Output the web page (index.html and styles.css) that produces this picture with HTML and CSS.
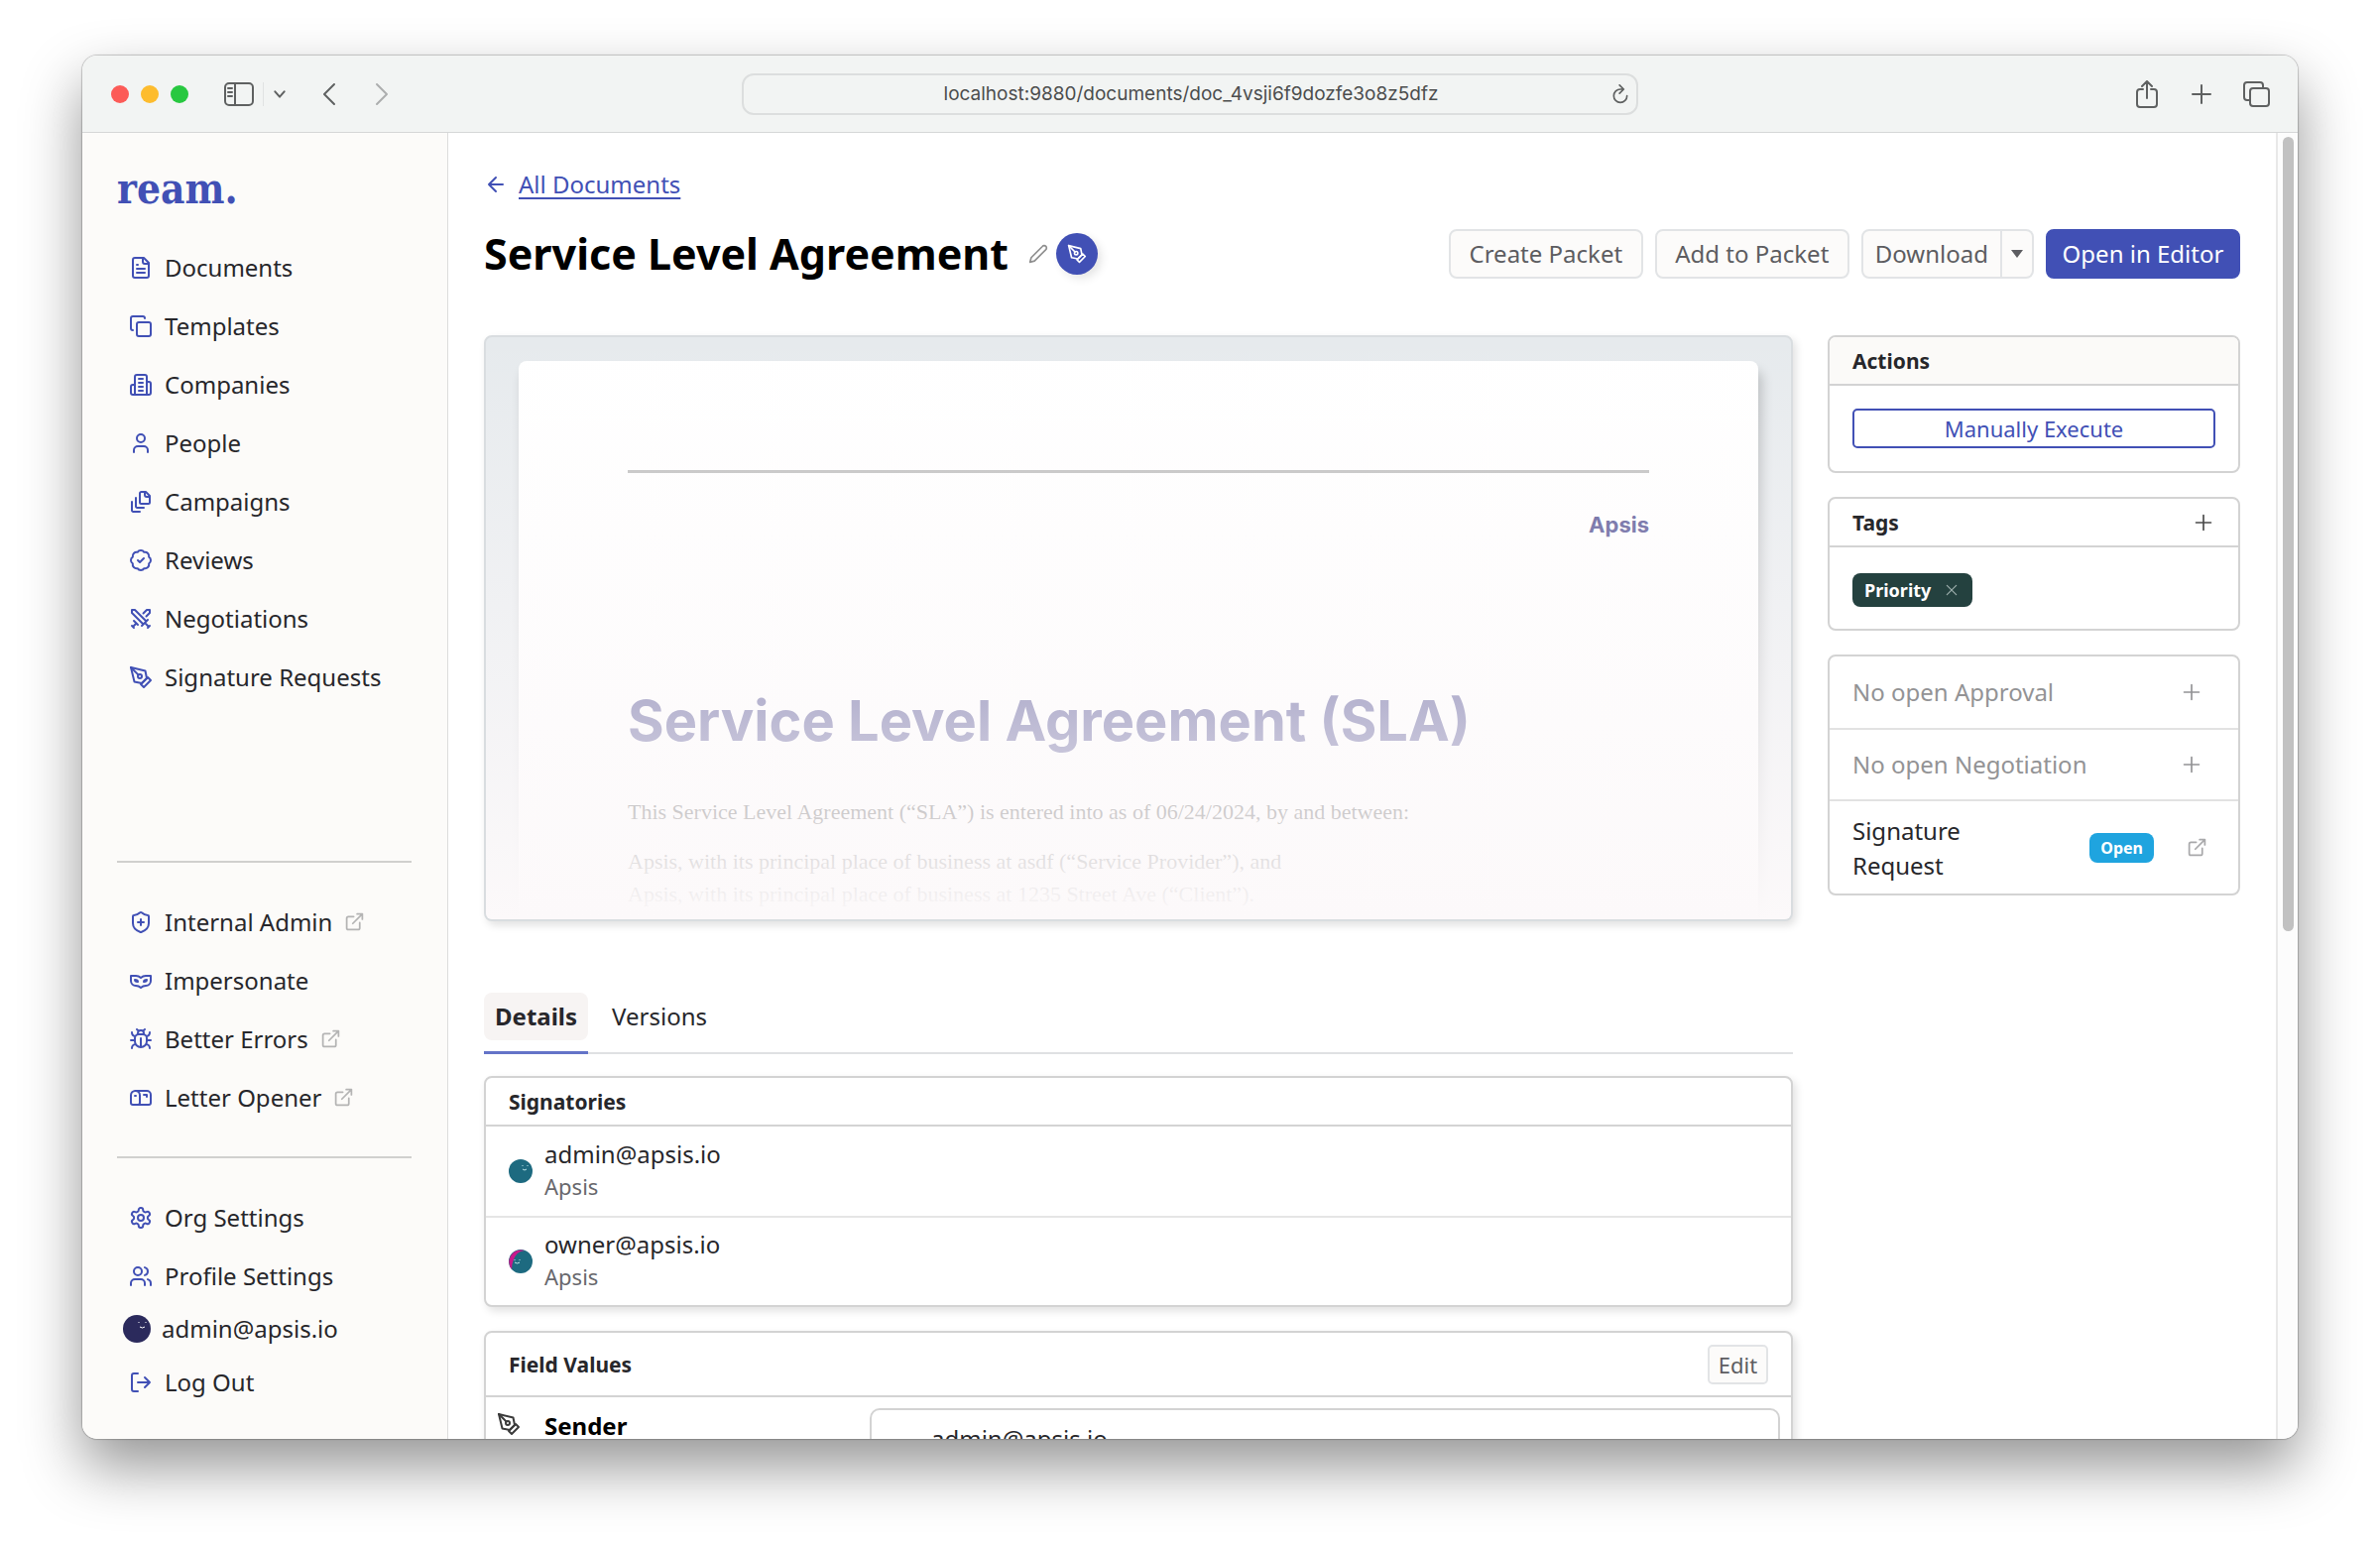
FILE: index.html
```html
<!DOCTYPE html>
<html lang="en">
<head>
  <meta charset="UTF-8">
  <title>Service Level Agreement</title>
  <link rel="stylesheet" href="styles.css">
</head>
<body>

  <!-- icon sprite -->
  <svg class="sprite" aria-hidden="true">
    <symbol id="i-file" viewBox="0 0 24 24"><path d="M15 2H6a2 2 0 0 0-2 2v16a2 2 0 0 0 2 2h12a2 2 0 0 0 2-2V7z"/><path d="M14 2v4a2 2 0 0 0 2 2h4M9 9H8M16 13H8M16 17H8"/></symbol>
    <symbol id="i-copy" viewBox="0 0 24 24"><rect x="8" y="8" width="14" height="14" rx="2"/><path d="M4 16a2 2 0 0 1-2-2V4a2 2 0 0 1 2-2h10a2 2 0 0 1 2 2"/></symbol>
    <symbol id="i-building" viewBox="0 0 24 24"><path d="M6 22V4a2 2 0 0 1 2-2h8a2 2 0 0 1 2 2v18Z"/><path d="M6 12H4a2 2 0 0 0-2 2v6a2 2 0 0 0 2 2h2M18 9h2a2 2 0 0 1 2 2v9a2 2 0 0 1-2 2h-2M10 6h4M10 10h4M10 14h4M10 18h4"/></symbol>
    <symbol id="i-user" viewBox="0 0 24 24"><path d="M19 21v-2a4 4 0 0 0-4-4H9a4 4 0 0 0-4 4v2"/><circle cx="12" cy="7" r="4"/></symbol>
    <symbol id="i-stack" viewBox="0 0 24 24"><path d="M21 7h-3a2 2 0 0 1-2-2V2"/><path d="M21 6v6.5c0 .8-.7 1.5-1.5 1.5h-7c-.8 0-1.5-.7-1.5-1.5v-9c0-.8.7-1.5 1.5-1.5H17Z"/><path d="M7 8v8.8c0 .3.2.6.4.8.2.2.5.4.8.4H15"/><path d="M3 12v8.8c0 .3.2.6.4.8.2.2.5.4.8.4H11"/></symbol>
    <symbol id="i-badge" viewBox="0 0 24 24"><path d="M3.85 8.62a4 4 0 0 1 4.78-4.77 4 4 0 0 1 6.74 0 4 4 0 0 1 4.78 4.78 4 4 0 0 1 0 6.74 4 4 0 0 1-4.77 4.78 4 4 0 0 1-6.75 0 4 4 0 0 1-4.78-4.77 4 4 0 0 1 0-6.76Z"/><path d="m9 12 2 2 4-4"/></symbol>
    <symbol id="i-swords" viewBox="0 0 24 24"><path d="M14.5 17.5 3 6V3h3l11.5 11.5M13 19l6-6M16 16l4 4M19 21l2-2M14.5 6.5 18 3h3v3l-3.5 3.5M5 14l4 4M7 17l-3 3M3 19l2 2"/></symbol>
    <symbol id="i-pen" viewBox="0 0 24 24"><path d="m12 19 7-7 3 3-7 7-3-3z"/><path d="m18 13-1.5-7.5L2 2l3.5 14.5L13 18l5-5z"/><path d="m2 2 7.6 7.6"/><circle cx="11" cy="11" r="2"/></symbol>
    <symbol id="i-shield" viewBox="0 0 24 24"><path d="M20 13c0 5-3.5 7.5-7.66 8.95a1 1 0 0 1-.67-.01C7.5 20.5 4 18 4 13V6a1 1 0 0 1 1-1c2 0 4.5-1.2 6.24-2.72a1.17 1.17 0 0 1 1.52 0C14.51 3.81 17 5 19 5a1 1 0 0 1 1 1z"/><path d="M9 12h6M12 9v6"/></symbol>
    <symbol id="i-mask" viewBox="0 0 24 24"><path d="M2 12a5 5 0 0 0 5 5 8 8 0 0 1 5 2 8 8 0 0 1 5-2 5 5 0 0 0 5-5V7h-5a8 8 0 0 0-5 2 8 8 0 0 0-5-2H2Z"/><path d="M6 11c1.5 0 3 .5 3 2-2 0-3 0-3-2ZM18 11c-1.5 0-3 .5-3 2 2 0 3 0 3-2Z"/></symbol>
    <symbol id="i-bug" viewBox="0 0 24 24"><path d="m8 2 1.9 1.9M14.1 3.9 16 2M9 7.1v-1a3 3 0 1 1 6 0v1M12 20c-3.3 0-6-2.7-6-6v-3a4 4 0 0 1 4-4h4a4 4 0 0 1 4 4v3c0 3.3-2.7 6-6 6M12 20v-9M6.5 9C4.6 8.8 3 7.1 3 5M6 13H2M3 21c0-2.1 1.7-3.9 3.8-4M21 5c0 2.1-1.6 3.8-3.5 4M22 13h-4M17.2 17c2.1.1 3.8 1.9 3.8 4"/></symbol>
    <symbol id="i-mailbox" viewBox="0 0 24 24"><path d="M22 17a2 2 0 0 1-2 2H4a2 2 0 0 1-2-2V9.5C2 7 4 5 6.5 5H18c2.2 0 4 1.8 4 4v8Z"/><path d="M15 9h3v2M6.5 5C9 5 11 7 11 9.5V17a2 2 0 0 1-2 2M6 10h1"/></symbol>
    <symbol id="i-gear" viewBox="0 0 24 24"><path d="M12.22 2h-.44a2 2 0 0 0-2 2v.18a2 2 0 0 1-1 1.73l-.43.25a2 2 0 0 1-2 0l-.15-.08a2 2 0 0 0-2.73.73l-.22.38a2 2 0 0 0 .73 2.73l.15.1a2 2 0 0 1 1 1.72v.51a2 2 0 0 1-1 1.74l-.15.09a2 2 0 0 0-.73 2.73l.22.38a2 2 0 0 0 2.73.73l.15-.08a2 2 0 0 1 2 0l.43.25a2 2 0 0 1 1 1.73V20a2 2 0 0 0 2 2h.44a2 2 0 0 0 2-2v-.18a2 2 0 0 1 1-1.73l.43-.25a2 2 0 0 1 2 0l.15.08a2 2 0 0 0 2.73-.73l.22-.39a2 2 0 0 0-.73-2.73l-.15-.08a2 2 0 0 1-1-1.74v-.5a2 2 0 0 1 1-1.74l.15-.09a2 2 0 0 0 .73-2.73l-.22-.38a2 2 0 0 0-2.73-.73l-.15.08a2 2 0 0 1-2 0l-.43-.25a2 2 0 0 1-1-1.73V4a2 2 0 0 0-2-2z"/><circle cx="12" cy="12" r="3"/></symbol>
    <symbol id="i-users" viewBox="0 0 24 24"><path d="M16 21v-2a4 4 0 0 0-4-4H6a4 4 0 0 0-4 4v2"/><circle cx="9" cy="7" r="4"/><path d="M22 21v-2a4 4 0 0 0-3-3.87M16 3.13a4 4 0 0 1 0 7.75"/></symbol>
    <symbol id="i-logout" viewBox="0 0 24 24"><path d="M9 21H5a2 2 0 0 1-2-2V5a2 2 0 0 1 2-2h4M16 17l5-5-5-5M21 12H9"/></symbol>
    <symbol id="i-external" viewBox="0 0 24 24"><path d="M15 3h6v6M10 14 21 3M18 13v6a2 2 0 0 1-2 2H5a2 2 0 0 1-2-2V8a2 2 0 0 1 2-2h6"/></symbol>
    <symbol id="i-arrow" viewBox="0 0 24 24"><path d="m12 19-7-7 7-7M19 12H5"/></symbol>
    <symbol id="i-pencil" viewBox="0 0 24 24"><path d="M17 3a2.85 2.83 0 1 1 4 4L7.5 20.5 2 22l1.5-5.5Z"/></symbol>
    <symbol id="i-plus" viewBox="0 0 24 24"><path d="M3 12h18M12 3v18"/></symbol>
    <symbol id="i-x" viewBox="0 0 24 24"><path d="M4 4l16 16M20 4 4 20"/></symbol>
    <symbol id="i-caret" viewBox="0 0 24 24"><path d="M3 6h18l-9 12z"/></symbol>
    <symbol id="i-panel" viewBox="0 0 30 24"><rect x="1" y="1" width="28" height="22" rx="4"/><path d="M11 1v22M4 6h4M4 10h4M4 14h4"/></symbol>
    <symbol id="i-down" viewBox="0 0 24 24"><path d="m5 8 7 8 7-8"/></symbol>
    <symbol id="i-prev" viewBox="0 0 24 24"><path d="M17 2 7 12l10 10"/></symbol>
    <symbol id="i-next" viewBox="0 0 24 24"><path d="m7 2 10 10L7 22"/></symbol>
    <symbol id="i-reload" viewBox="0 0 24 24"><path d="M15 6h-3a8 8 0 1 0 8 8M11 1l5 5-5 5"/></symbol>
    <symbol id="i-share" viewBox="0 0 28 28"><path d="M10 9H7a3 3 0 0 0-3 3v12a3 3 0 0 0 3 3h14a3 3 0 0 0 3-3V12a3 3 0 0 0-3-3h-3M14 18V1M9 6l5-5 5 5"/></symbol>
    <symbol id="i-tabs" viewBox="0 0 28 28"><rect x="8" y="8" width="19" height="18" rx="3"/><path d="M8 20H5a3 3 0 0 1-3-3V5a3 3 0 0 1 3-3h13a3 3 0 0 1 3 3v3"/></symbol>
  </svg>

  <div class="window">
    <div class="titlebar">
      <div class="titlebar-left">
        <div class="lights">
          <span class="light red"></span>
          <span class="light yellow"></span>
          <span class="light green"></span>
        </div>
        <button class="tool" aria-label="Show sidebar"><svg class="icon panel"><use href="#i-panel"/></svg></button>
        <button class="tool more" aria-label="Tab groups"><svg class="icon small"><use href="#i-down"/></svg></button>
        <button class="tool" aria-label="Back"><svg class="icon"><use href="#i-prev"/></svg></button>
        <button class="tool forward" aria-label="Forward"><svg class="icon"><use href="#i-next"/></svg></button>
      </div>
      <div class="address">
        <input type="text" aria-label="Address" value="localhost:9880/documents/doc_4vsji6f9dozfe3o8z5dfz">
        <button class="tool" aria-label="Reload"><svg class="icon"><use href="#i-reload"/></svg></button>
      </div>
      <div class="titlebar-right">
        <button class="tool" aria-label="Share"><svg class="icon large"><use href="#i-share"/></svg></button>
        <button class="tool" aria-label="New tab"><svg class="icon"><use href="#i-plus"/></svg></button>
        <button class="tool" aria-label="Show tabs"><svg class="icon large"><use href="#i-tabs"/></svg></button>
      </div>
    </div>

    <div class="app">
      <aside class="sidebar">
        <a class="logo" href="#">ream.</a>
        <nav class="nav">
          <a href="#"><svg class="icon"><use href="#i-file"/></svg>Documents</a>
          <a href="#"><svg class="icon"><use href="#i-copy"/></svg>Templates</a>
          <a href="#"><svg class="icon"><use href="#i-building"/></svg>Companies</a>
          <a href="#"><svg class="icon"><use href="#i-user"/></svg>People</a>
          <a href="#"><svg class="icon"><use href="#i-stack"/></svg>Campaigns</a>
          <a href="#"><svg class="icon"><use href="#i-badge"/></svg>Reviews</a>
          <a href="#"><svg class="icon"><use href="#i-swords"/></svg>Negotiations</a>
          <a href="#"><svg class="icon"><use href="#i-pen"/></svg>Signature Requests</a>
        </nav>
        <hr class="push">
        <nav class="nav">
          <a href="#"><svg class="icon"><use href="#i-shield"/></svg>Internal Admin<svg class="icon ext"><use href="#i-external"/></svg></a>
          <a href="#"><svg class="icon"><use href="#i-mask"/></svg>Impersonate</a>
          <a href="#"><svg class="icon"><use href="#i-bug"/></svg>Better Errors<svg class="icon ext"><use href="#i-external"/></svg></a>
          <a href="#"><svg class="icon"><use href="#i-mailbox"/></svg>Letter Opener<svg class="icon ext"><use href="#i-external"/></svg></a>
        </nav>
        <hr>
        <nav class="nav">
          <a href="#"><svg class="icon"><use href="#i-gear"/></svg>Org Settings</a>
          <a href="#"><svg class="icon"><use href="#i-users"/></svg>Profile Settings</a>
          <a class="me" href="#">
            <svg class="avatar" viewBox="0 0 28 28"><circle cx="14" cy="14" r="14" fill="#2b2a5c"/><path d="M16 7v1M23 7v1M17 12q2.5 2 5 0" stroke="#fff" fill="none"/></svg>admin@apsis.io
          </a>
          <a href="#"><svg class="icon"><use href="#i-logout"/></svg>Log Out</a>
        </nav>
      </aside>

      <main class="main">
        <div class="back"><svg class="icon"><use href="#i-arrow"/></svg><a href="#">All Documents</a></div>

        <div class="page-head">
          <h1>Service Level Agreement</h1>
          <button class="rename" aria-label="Rename"><svg class="icon"><use href="#i-pencil"/></svg></button>
          <span class="status"><svg class="icon"><use href="#i-pen"/></svg></span>
          <div class="buttons">
            <button class="btn">Create Packet</button>
            <button class="btn">Add to Packet</button>
            <div class="split">
              <button class="btn">Download</button>
              <button class="btn caret" aria-label="More downloads"><svg><use href="#i-caret"/></svg></button>
            </div>
            <button class="btn primary">Open in Editor</button>
          </div>
        </div>

        <div class="columns">
          <div class="content">
            <section class="preview">
              <article class="paper">
                <div class="rule"></div>
                <p class="org">Apsis</p>
                <h2>Service Level Agreement (SLA)</h2>
                <p>This Service Level Agreement (“SLA”) is entered into as of 06/24/2024, by and between:</p>
                <p>Apsis, with its principal place of business at asdf (“Service Provider”), and<br>
                Apsis, with its principal place of business at 1235 Street Ave (“Client”).</p>
              </article>
            </section>

            <div class="tabs">
              <a class="tab active" href="#"><span>Details</span></a>
              <a class="tab" href="#"><span>Versions</span></a>
            </div>

            <section class="card raised">
              <header><h3>Signatories</h3></header>
              <div class="person">
                <svg class="avatar" viewBox="0 0 24 24"><circle cx="12" cy="12" r="12" fill="#1d6a80"/><path d="M14 6v1M19 6v1M14 10q2 2 4 0" stroke="#bfe6ea" fill="none"/></svg>
                <div class="who">
                  <div>admin@apsis.io</div>
                  <div class="sub">Apsis</div>
                </div>
              </div>
              <div class="person">
                <svg class="avatar" viewBox="0 0 24 24"><circle cx="12" cy="12" r="12" fill="#1d6a80"/><path d="M3 20A12 12 0 0 1 16 1Q4 2 3 20Z" fill="#c8188c"/><path d="M6 10v1M11 10v1M6 13q2.5 2 5 0" stroke="#bfe6ea" fill="none"/></svg>
                <div class="who">
                  <div>owner@apsis.io</div>
                  <div class="sub">Apsis</div>
                </div>
              </div>
            </section>

            <section class="card raised">
              <header class="tall"><h3>Field Values</h3><button class="btn edit">Edit</button></header>
              <div class="field">
                <svg class="icon"><use href="#i-pen"/></svg>
                <label for="sender">Sender</label>
                <input id="sender" type="text" value="admin@apsis.io">
              </div>
            </section>
          </div>

          <div class="side">
            <section class="card">
              <header class="tinted"><h3>Actions</h3></header>
              <div class="card-body"><button class="btn outline">Manually Execute</button></div>
            </section>

            <section class="card">
              <header><h3>Tags</h3><button class="add" aria-label="Add tag"><svg class="icon"><use href="#i-plus"/></svg></button></header>
              <div class="card-body tags">
                <span class="tag">Priority<button aria-label="Remove tag"><svg class="icon"><use href="#i-x"/></svg></button></span>
              </div>
            </section>

            <section class="card">
              <div class="row muted">No open Approval<button class="add" aria-label="Open approval"><svg class="icon"><use href="#i-plus"/></svg></button></div>
              <div class="row muted">No open Negotiation<button class="add" aria-label="Open negotiation"><svg class="icon"><use href="#i-plus"/></svg></button></div>
              <div class="row request">
                <span class="request-name">Signature Request</span>
                <span class="open">Open</span>
                <a href="#" aria-label="View signature request"><svg class="icon ext"><use href="#i-external"/></svg></a>
              </div>
            </section>
          </div>
        </div>
      </main>

      <div class="scrollbar"><div class="thumb"></div></div>
    </div>
  </div>

</body>
</html>
```

FILE: styles.css
```css
* { box-sizing: border-box; }
body {
  margin: 0;
  height: 100vh;
  padding: 56px 83px 110px;
  background: #fff;
  color: #27272b;
  font-family: "Noto Sans", sans-serif;
  font-size: 24px;
  line-height: 36px;
}
h1, h2, h3, p { margin: 0; }
a { color: inherit; text-decoration: none; }
button {
  padding: 0;
  border: 0;
  background: none;
  color: inherit;
  font: inherit;
}
.sprite { position: absolute; width: 0; height: 0; }
.icon {
  flex: none;
  display: block;
  width: 24px;
  height: 24px;
  fill: none;
  stroke: currentColor;
  stroke-width: 2;
  stroke-linecap: round;
  stroke-linejoin: round;
}
.icon.ext { width: 21px; height: 21px; color: #a9a9ab; }

/* browser window */
.window {
  display: flex;
  flex-direction: column;
  height: 100%;
  overflow: hidden;
  border-radius: 15px;
  background: #fff;
  box-shadow: 0 0 1px 1px rgba(0, 0, 0, 0.2), 0 28px 60px rgba(0, 0, 0, 0.42);
}
.titlebar {
  flex: none;
  display: grid;
  grid-template-columns: 1fr minmax(0, 904px) 1fr;
  align-items: center;
  height: 78px;
  border-bottom: 1px solid #d5d7d7;
  background: #f2f4f3;
  color: #5f6161;
}
.titlebar-left { display: flex; align-items: center; padding-left: 29px; }
.lights { display: flex; gap: 12px; margin-right: 36px; }
.light { width: 18px; height: 18px; border-radius: 50%; }
.red { background: #fc5b57; }
.yellow { background: #fdbc2e; }
.green { background: #28c840; }
.icon.panel { width: 30px; height: 24px; }
.icon.small { width: 16px; height: 16px; stroke-width: 3; }
.icon.large { width: 28px; height: 28px; }
.more { margin: 0 30px 0 9px; padding: 4px 0 4px 8px; border-left: 1px solid #e0e2e2; }
.forward { margin-left: 29px; color: #acaeae; }
.address {
  display: flex;
  align-items: center;
  height: 42px;
  padding: 0 6px 0 28px;
  border: 2px solid #dcdede;
  border-radius: 12px;
}
.address input {
  flex: 1;
  min-width: 0;
  padding: 0;
  border: 0;
  background: none;
  color: #4b4d4d;
  font-family: Inter, sans-serif;
  font-size: 19px;
  text-align: center;
}
.address .icon { width: 20px; height: 20px; }
.titlebar-right { display: flex; align-items: center; justify-content: flex-end; gap: 29px; padding-right: 28px; }

.app { flex: 1; display: flex; min-height: 0; }

/* sidebar */
.sidebar {
  flex: none;
  display: flex;
  flex-direction: column;
  width: 369px;
  padding: 29px 36px 28px 35px;
  border-right: 1px solid #dcdcdc;
  background: #fcfbf9;
}
.logo {
  margin-bottom: 21px;
  color: #4150b5;
  font-family: "DejaVu Serif Condensed", "DejaVu Serif", serif;
  font-size: 42px;
  font-weight: bold;
  line-height: 56px;
}
.nav a {
  display: flex;
  align-items: center;
  gap: 12px;
  height: 59px;
  padding-left: 12px;
}
.nav .icon { color: #4150b5; }
.nav .icon.ext { color: #b4b4b4; }
.nav .me { height: 48px; padding-left: 6px; gap: 11px; }
.me .avatar { width: 28px; height: 28px; }
.sidebar hr {
  width: 100%;
  height: 2px;
  margin: 30px 0;
  border: 0;
  background: #d0d0ce;
}
.sidebar .push { margin-top: auto; }

/* main column */
.main { flex: 1; min-width: 0; padding: 34px 36px 0; overflow: hidden; }
.back { display: flex; align-items: center; gap: 11px; color: #4150b5; }
.back a { text-decoration: underline; text-decoration-thickness: 2px; text-underline-offset: 4px; }
.page-head { display: flex; align-items: center; height: 50px; margin: 27px 0 57px; }
.page-head h1 { color: #000; font-size: 43px; line-height: 50px; }
.rename { margin: 0 8px 0 20px; color: #8f8f8f; }
.rename .icon { width: 20px; height: 20px; }
.status {
  display: grid;
  place-items: center;
  width: 42px;
  height: 42px;
  border-radius: 50%;
  background: #4150b5;
  color: #fff;
  box-shadow: 4px 4px 8px rgba(0, 0, 0, 0.1);
}
.status .icon { width: 20px; height: 20px; }
.buttons { display: flex; gap: 12px; margin-left: auto; }
.btn {
  min-width: 196px;
  height: 50px;
  padding: 0 12px;
  border: 2px solid #e2e4e6;
  border-radius: 8px;
  background: #fcfbfa;
  color: #5d5d61;
  white-space: nowrap;
}
.split { display: flex; }
.split .btn { min-width: 140px; border-radius: 8px 0 0 8px; }
.split .caret {
  min-width: 32px;
  padding: 0;
  border-left: 0;
  border-radius: 0 8px 8px 0;
}
.caret svg { display: block; width: 16px; height: 16px; margin: 0 auto; fill: currentColor; }
.btn.primary { border-color: #4150b5; background: #4150b5; color: #fff; }
.btn.outline {
  width: 100%;
  height: 40px;
  border-color: #4150b5;
  border-radius: 5px;
  background: #fff;
  color: #4150b5;
  font-size: 22px;
  line-height: 32px;
}
.btn.edit { min-width: 61px; height: 40px; padding: 0 8px; border-radius: 5px; font-size: 22px; line-height: 32px; }

.columns { display: grid; grid-template-columns: minmax(0, 1fr) 416px; gap: 35px; align-items: start; }

/* document preview */
.preview {
  position: relative;
  height: 591px;
  padding: 24px 33px 0;
  overflow: hidden;
  border: 2px solid #d9dde0;
  border-radius: 8px;
  background: #e6eaed;
  box-shadow: 3px 4px 8px rgba(0, 0, 0, 0.12);
}
.preview::after {
  content: "";
  position: absolute;
  inset: 0;
  background: linear-gradient(rgba(252, 249, 250, 0), #fcf9fa);
}
.paper {
  height: 100%;
  padding: 110px 110px 0;
  border-radius: 8px 8px 0 0;
  background: #fff;
  box-shadow: 4px 10px 12px rgba(0, 0, 0, 0.2);
  color: #000;
  font-family: "Liberation Serif", serif;
  font-size: 22px;
  line-height: 33px;
  white-space: nowrap;
}
.rule { height: 3px; background: #bcbcbc; }
.paper .org {
  margin: 36px 0 150px;
  color: #434189;
  font-family: Inter, sans-serif;
  font-weight: bold;
  line-height: 32px;
  text-align: right;
}
.paper h2 {
  margin-bottom: 43px;
  color: #434189;
  font-family: Inter, sans-serif;
  font-size: 56px;
  line-height: 64px;
}
.paper p + p { margin-top: 17px; }

/* tabs */
.tabs { display: flex; gap: 12px; margin: 72px 0 22px; box-shadow: inset 0 -2px #dfe1e3; }
.tab { padding-bottom: 11px; border-bottom: 3px solid transparent; }
.tab span { display: block; padding: 6px 12px; border-radius: 8px; }
.tab.active { border-color: #6474c8; font-weight: bold; }
.tab.active span { padding: 6px 11px; background: #f7f4f3; }

/* cards */
.card {
  margin-bottom: 24px;
  border: 2px solid #d3d3d3;
  border-radius: 8px;
  background: #fff;
}
.raised { box-shadow: 3px 4px 8px rgba(0, 0, 0, 0.12); }
.card header {
  display: flex;
  align-items: center;
  justify-content: space-between;
  height: 49px;
  padding: 0 23px;
  border-bottom: 2px solid #d3d3d3;
  border-radius: 6px 6px 0 0;
}
.card header.tall { height: 65px; }
.card header.tinted { background: #fbfaf8; }
.card h3 { font-size: 21px; line-height: 30px; }
.card-body { padding: 23px; }
.card-body.tags { padding: 26px 23px 22px; }
.person { display: flex; align-items: center; gap: 12px; height: 90px; padding: 0 23px; }
.person + .person { border-top: 2px solid #e5e5e5; }
.person .avatar { width: 24px; height: 24px; }
.who { padding-bottom: 6px; }
.sub { color: #68686c; font-size: 22px; line-height: 28px; }
.field { display: grid; grid-template-columns: 48px 328px 1fr; padding: 11px; color: #3a3a3a; }
.field label { color: #000; font-weight: bold; }
.field .icon { margin-top: 4px; }
.field input {
  min-width: 0;
  height: 60px;
  padding: 0 60px;
  border: 2px solid #d3d3d3;
  border-radius: 10px;
  color: #27272b;
  font: inherit;
}
.add { padding: 0 2px; color: #4a4a4a; }
.add .icon { width: 20px; height: 20px; }
.tag {
  display: inline-flex;
  align-items: center;
  gap: 14px;
  height: 34px;
  padding: 0 14px 0 12px;
  border-radius: 8px;
  background: #24413f;
  color: #fff;
  font-size: 18px;
  font-weight: bold;
}
.tag .icon { width: 14px; height: 14px; color: #9fb0ae; }
.tags { display: flex; }
.row {
  display: flex;
  align-items: center;
  justify-content: space-between;
  height: 72px;
  padding: 0 35px 0 23px;
}
.row + .row { border-top: 2px solid #e2e2e2; }
.muted, .muted .add { color: #939395; }
.request { height: 95px; padding-right: 31px; }
.request-name { width: 140px; margin-right: auto; line-height: 35px; }
.open {
  margin-right: 33px;
  padding: 0 11px;
  border-radius: 8px;
  background: #1fa4df;
  color: #fff;
  font-size: 16px;
  font-weight: bold;
  line-height: 30px;
}

.scrollbar { flex: none; width: 22px; padding: 4px 4px 0 5px; border-left: 2px solid #e8e8e8; background: #fcfcfc; }
.thumb { height: 61%; border-radius: 6px; background: #c1c1c1; }
```
